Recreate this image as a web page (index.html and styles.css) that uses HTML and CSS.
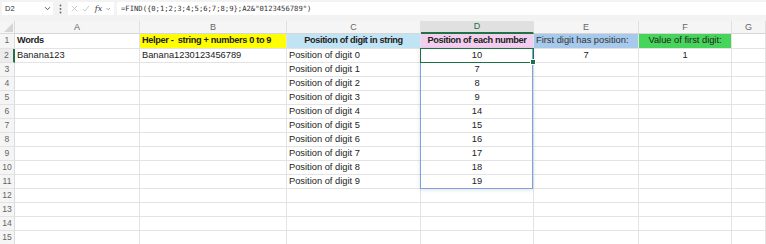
FILE: index.html
```html
<!DOCTYPE html>
<html lang="en">
<head>
    <meta charset="UTF-8">
    <title>FIND first digit</title>
    <link rel="stylesheet" href="styles.css">
</head>
<body>
    <div class="formula-bar">
        <div class="name-box">
            <span>D2</span>
            <svg class="chev" width="7" height="5" viewBox="0 0 7 5"><path d="M1 1.2 L3.5 3.7 L6 1.2" fill="none" stroke="#555" stroke-width="1"/></svg>
        </div>
        <svg class="dots" width="3" height="10" viewBox="0 0 3 10"><circle cx="1.5" cy="1.5" r="0.9" fill="#666"/><circle cx="1.5" cy="5" r="0.9" fill="#666"/><circle cx="1.5" cy="8.5" r="0.9" fill="#666"/></svg>
        <div class="fx-box">
            <svg width="9" height="9" viewBox="0 0 9 9"><path d="M1 1 L8 8 M8 1 L1 8" stroke="#bbb" stroke-width="1"/></svg>
            <svg width="10" height="9" viewBox="0 0 10 9"><path d="M1 5 L3.8 7.8 L9 1" fill="none" stroke="#bbb" stroke-width="1"/></svg>
            <span class="fx">fx</span>
            <svg width="6" height="4" viewBox="0 0 6 4"><path d="M0.8 0.8 L3 3 L5.2 0.8" fill="none" stroke="#777" stroke-width="0.9"/></svg>
        </div>
        <div class="formula">=FIND({0;1;2;3;4;5;6;7;8;9};A2&amp;"0123456789")</div>
    </div>
    <div class="band"></div>

    <div class="sheet">
        <div class="corner"><svg width="9" height="9" viewBox="0 0 9 9"><path d="M9 0 L9 9 L0 9 Z" fill="#d4d4d4"/></svg></div>
        <div class="ch">A</div>
        <div class="ch">B</div>
        <div class="ch">C</div>
        <div class="ch sel">D</div>
        <div class="ch">E</div>
        <div class="ch">F</div>
        <div class="ch">G</div>

        <div class="rh">1</div>
        <div class="c b">Words</div>
        <div class="c b yellow">Helper -&nbsp; string + numbers 0 to 9</div>
        <div class="c b blue center">Position of digit in string</div>
        <div class="c b pink center">Position of each number</div>
        <div class="c sky">First digit has position:</div>
        <div class="c green center">Value of first digit:</div>
        <div class="c"></div>

        <div class="rh act">2</div>
        <div class="c">Banana123</div>
        <div class="c">Banana1230123456789</div>
        <div class="c">Position of digit 0</div>
        <div class="c center">10</div>
        <div class="c center">7</div>
        <div class="c center">1</div>
        <div class="c"></div>

        <div class="rh">3</div><div class="c"></div><div class="c"></div><div class="c">Position of digit 1</div><div class="c center">7</div><div class="c"></div><div class="c"></div><div class="c"></div>
        <div class="rh">4</div><div class="c"></div><div class="c"></div><div class="c">Position of digit 2</div><div class="c center">8</div><div class="c"></div><div class="c"></div><div class="c"></div>
        <div class="rh">5</div><div class="c"></div><div class="c"></div><div class="c">Position of digit 3</div><div class="c center">9</div><div class="c"></div><div class="c"></div><div class="c"></div>
        <div class="rh">6</div><div class="c"></div><div class="c"></div><div class="c">Position of digit 4</div><div class="c center">14</div><div class="c"></div><div class="c"></div><div class="c"></div>
        <div class="rh">7</div><div class="c"></div><div class="c"></div><div class="c">Position of digit 5</div><div class="c center">15</div><div class="c"></div><div class="c"></div><div class="c"></div>
        <div class="rh">8</div><div class="c"></div><div class="c"></div><div class="c">Position of digit 6</div><div class="c center">16</div><div class="c"></div><div class="c"></div><div class="c"></div>
        <div class="rh">9</div><div class="c"></div><div class="c"></div><div class="c">Position of digit 7</div><div class="c center">17</div><div class="c"></div><div class="c"></div><div class="c"></div>
        <div class="rh">10</div><div class="c"></div><div class="c"></div><div class="c">Position of digit 8</div><div class="c center">18</div><div class="c"></div><div class="c"></div><div class="c"></div>
        <div class="rh">11</div><div class="c"></div><div class="c"></div><div class="c">Position of digit 9</div><div class="c center">19</div><div class="c"></div><div class="c"></div><div class="c"></div>
        <div class="rh">12</div><div class="c"></div><div class="c"></div><div class="c"></div><div class="c"></div><div class="c"></div><div class="c"></div><div class="c"></div>
        <div class="rh">13</div><div class="c"></div><div class="c"></div><div class="c"></div><div class="c"></div><div class="c"></div><div class="c"></div><div class="c"></div>
        <div class="rh">14</div><div class="c"></div><div class="c"></div><div class="c"></div><div class="c"></div><div class="c"></div><div class="c"></div><div class="c"></div>
        <div class="rh">15</div><div class="c"></div><div class="c"></div><div class="c"></div><div class="c"></div><div class="c"></div><div class="c"></div><div class="c"></div>

        <!-- selection D2:D11 and active cell -->
        <div class="range"></div>
        <div class="active"><span class="handle"></span></div>
    </div>
</body>
</html>
```

FILE: styles.css
```css
body {
    margin: 0;
    background-color: #fff;
    font-family: "Liberation Sans", Arial, sans-serif;
    color: #222;
    overflow: hidden;
}
.formula-bar {
    display: flex;
    align-items: center;
    height: 17px;
    background-color: #f3f3f3;
    padding: 0 0 0 2px;
    box-sizing: border-box;
}
.name-box {
    display: flex;
    align-items: center;
    justify-content: space-between;
    width: 51px;
    height: 13px;
    background-color: #fff;
    padding: 0 2px 0 3px;
    box-sizing: border-box;
    font-size: 7.5px;
    color: #333;
}
.dots {
    margin: 0 6px 0 6px;
}
.fx-box {
    display: flex;
    align-items: center;
    gap: 4px;
    width: 46px;
    height: 13px;
    background-color: #fff;
    padding: 0 3px;
    box-sizing: border-box;
}
.fx {
    font-family: "DejaVu Serif", serif;
    font-style: italic;
    font-size: 8px;
    color: #444;
    margin-left: 1px;
}
.formula {
    flex: 1;
    height: 13px;
    line-height: 13px;
    margin-left: 3px;
    background-color: #fff;
    padding-left: 4px;
    font-family: "DejaVu Sans Mono", "Liberation Mono", monospace;
    font-size: 7.2px;
    color: #333;
}
.band {
    height: 4px;
    background-color: #f3f3f3;
}
.sheet {
    position: relative;
    display: grid;
    grid-template-columns: 15px 125px 147px 134px 113px 105px 93px 1fr;
    grid-template-rows: 13px 15px repeat(14, 14px);
    font-size: 9.3px;
}
.corner {
    background-color: #f5f5f5;
    border-right: 1px solid #dcdcdc;
    border-bottom: 1px solid #dcdcdc;
    display: flex;
    align-items: flex-end;
    justify-content: flex-end;
    padding: 0 1px 1px 0;
}
.ch {
    background-color: #f5f5f5;
    border-right: 1px solid #e0e0e0;
    border-bottom: 1px solid #d6d6d6;
    text-align: center;
    line-height: 12px;
    color: #666;
    font-size: 9px;
}
.ch.sel {
    background-color: #e0e0e0;
    color: #217346;
    border-bottom: 2px solid #217346;
    line-height: 11px;
}
.rh {
    background-color: #f5f5f5;
    border-right: 1px solid #dcdcdc;
    border-bottom: 1px solid #e3e3e3;
    text-align: center;
    line-height: 13px;
    color: #666;
    font-size: 8.6px;
}
.rh.act {
    border-right: 2px solid #217346;
    background-color: #ececec;
}
.c {
    border-right: 1px solid #e3e3e3;
    border-bottom: 1px solid #e3e3e3;
    padding-left: 2px;
    line-height: 13px;
    white-space: nowrap;
    overflow: hidden;
}
.b {
    font-weight: bold;
    font-size: 9.2px;
    letter-spacing: -0.35px;
}
.center { text-align: center; padding-left: 0; }
.yellow { background-color: #ffff00; }
.blue { background-color: #c1e4f5; }
.pink { background-color: #f2ceef; }
.sky { background-color: #a6c9ec; color: #333; }
.green { background-color: #47d45a; }

.range {
    position: absolute;
    left: 420px;
    top: 27px;
    width: 113px;
    height: 141px;
    border: 1px solid #7ba3e3;
    box-sizing: border-box;
    box-shadow: 0 1px 4px rgba(0, 0, 0, 0.12);
    pointer-events: none;
}
.active {
    position: absolute;
    left: 420px;
    top: 27px;
    width: 114px;
    height: 15px;
    border: 1.5px solid #1e7145;
    box-sizing: border-box;
}
.handle {
    position: absolute;
    right: -3px;
    bottom: -3px;
    width: 4px;
    height: 4px;
    background-color: #1e7145;
    border: 1px solid #fff;
}
```
